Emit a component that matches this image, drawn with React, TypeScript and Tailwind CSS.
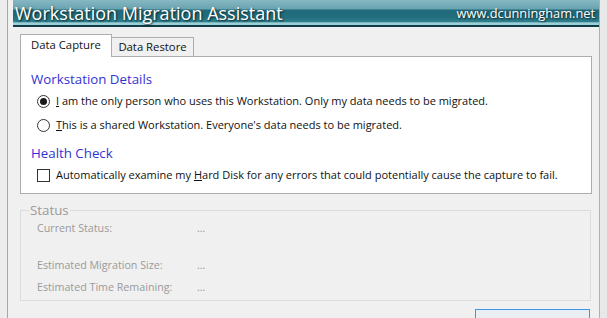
import React from "react";

const FONT = { fontFamily: "'Open Sans', 'Noto Sans', sans-serif" };

function Radio({ checked }: { checked?: boolean }) {
  return (
    <span className="flex h-[13px] w-[13px] shrink-0 items-center justify-center rounded-full border border-[#333] bg-white">
      {checked && <span className="h-[7px] w-[7px] rounded-full bg-[#1a1a1a]" />}
    </span>
  );
}

function Checkbox() {
  return <span className="h-[13px] w-[13px] shrink-0 border border-[#333] bg-white" />;
}

export default function App() {
  return (
    <div
      className="flex h-[318px] w-[607px] overflow-hidden bg-[#f0f0f0] text-[11px] text-[#111]"
      style={FONT}
    >
      <div className="w-[7px] shrink-0 bg-[#ededed]" />
      <div className="w-px shrink-0 bg-[#a8a8a8]" />

      <div className="flex min-w-0 flex-1 flex-col">
        {/* title bar */}
        <div className="ml-[5px] flex h-[27px] shrink-0 items-center justify-between border-b-2 border-[#0f3d47] bg-[linear-gradient(to_bottom,#86b8c2_0%,#69a3b0_36%,#21697a_40%,#226e7d_70%,#2f7f8d_86%,#9ccfd6_92%,#9ccfd6_100%)] pl-[2px] pr-[4px] text-white">
          <span className="text-[18px] leading-[22px] [text-shadow:1px_1px_2px_rgba(0,0,0,0.75)]">
            Workstation Migration Assistant
          </span>
          <span className="text-[12.8px] leading-[18px] [text-shadow:1px_1px_2px_rgba(0,0,0,0.75)]">
            www.dcunningham.net
          </span>
        </div>

        <div className="flex flex-1 flex-col pl-[12px] pr-[7px] pt-[7px]">
          {/* tabs */}
          <div className="relative z-10 flex items-end text-[11.3px]">
            <div className="-mb-px flex h-[23px] w-[92px] items-center justify-center border border-b-0 border-[#adadad] bg-white pb-[2px]">
              Data Capture
            </div>
            <div className="flex h-[19px] w-[82px] items-center justify-center border border-b-0 border-l-0 border-[#adadad] bg-[#f0f0f0]">
              Data Restore
            </div>
          </div>

          {/* panel */}
          <div className="flex h-[138px] flex-col border border-[#adadad] bg-white pl-[10px] pt-[12px]">
            <div className="text-[13.3px] leading-[20px] text-[#3333d6]">Workstation Details</div>
            <div className="mt-[4px] flex items-center gap-[6px] whitespace-nowrap pl-[6px] leading-[16px]">
              <Radio checked />
              <span>
                <u>I</u> am the only person who uses this Workstation. Only my data needs to be migrated.
              </span>
            </div>
            <div className="mt-[8px] flex items-center gap-[6px] whitespace-nowrap pl-[6px] leading-[16px]">
              <Radio />
              <span>
                <u>T</u>his is a shared Workstation. Everyone's data needs to be migrated.
              </span>
            </div>
            <div className="mt-[10px] text-[13.3px] leading-[20px] text-[#3333d6]">Health Check</div>
            <div className="mt-[4px] flex items-center gap-[6px] whitespace-nowrap pl-[6px] leading-[16px]">
              <Checkbox />
              <span>
                Automatically examine my <u>H</u>ard Disk for any errors that could potentially cause the capture to fail.
              </span>
            </div>
          </div>

          {/* status group */}
          <fieldset className="mr-[1px] mt-[6px] h-[101px] border border-[#dcdcdc] pl-[8px] text-[#9a9a9a]">
            <legend className="px-[1px] text-[13.3px] leading-[20px]">Status</legend>
            <div className="grid grid-cols-[160px_1fr] pl-[8px] text-[10.7px] leading-[16px]">
              <span>Current Status:</span>
              <span>...</span>
              <span className="mt-[21px]">Estimated Migration Size:</span>
              <span className="mt-[21px]">...</span>
              <span className="mt-[6px]">Estimated Time Remaining:</span>
              <span className="mt-[6px]">...</span>
            </div>
          </fieldset>

          <div className="mr-[2px] mt-[8px] flex justify-end">
            <div className="h-[24px] w-[115px] border border-[#3d96e6] bg-[#e9eef3]" />
          </div>
        </div>
      </div>

      <div className="w-px shrink-0 bg-[#b0b0b0]" />
      <div className="w-[7px] shrink-0 bg-[#e8e8e8]" />
    </div>
  );
}
